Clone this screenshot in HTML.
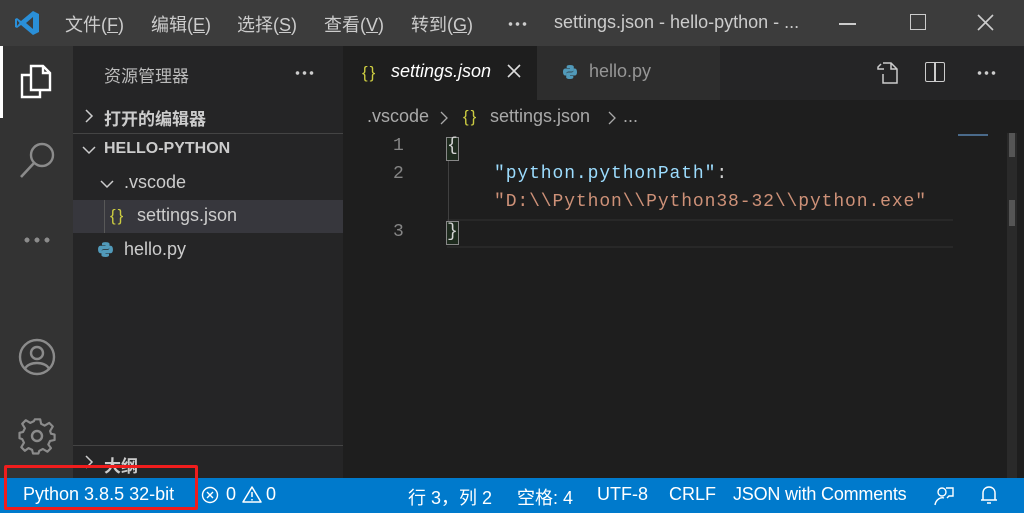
<!DOCTYPE html>
<html><head><meta charset="utf-8"><style>
*{margin:0;padding:0;box-sizing:border-box}
body{width:1024px;height:513px;overflow:hidden;background:#1e1e1e;font-family:"Liberation Sans","Noto Sans CJK SC",sans-serif;color:#ccc;position:relative}
.a{position:absolute;white-space:nowrap}
.mono{font-family:"Liberation Mono","DejaVu Sans Mono",monospace;font-size:18px;letter-spacing:0.9px}
.dots{position:absolute;width:20px;height:4px;background:radial-gradient(circle,#ccc 1.6px,transparent 2px) 0 0/7px 4px}
.br{position:absolute;font-size:17px;color:#cbcb41;letter-spacing:2px}
.st{position:absolute;top:484px;font-size:18px;color:#fff;white-space:nowrap}
</style></head><body>
<!-- title bar -->
<div class="a" style="left:0;top:0;width:1024px;height:46px;background:#3c3c3c"></div>
<svg class="a" style="left:14px;top:10px" width="26" height="26" viewBox="0 0 26 26"><path d="M19 1 L25 4 V22 L19 25 L7 15 L3 18 L1 17 V9 L3 8 L7 11 Z M19 7 L12 13 L19 19 Z M3 10 V16 L5.5 13 Z" fill="#2a8fd8"/></svg>
<div class="a" style="left:65px;top:11px;font-size:18px;color:#ccc">文件(<u>F</u>)</div>
<div class="a" style="left:151px;top:11px;font-size:18px;color:#ccc">编辑(<u>E</u>)</div>
<div class="a" style="left:237px;top:11px;font-size:18px;color:#ccc">选择(<u>S</u>)</div>
<div class="a" style="left:324px;top:11px;font-size:18px;color:#ccc">查看(<u>V</u>)</div>
<div class="a" style="left:411px;top:11px;font-size:18px;color:#ccc">转到(<u>G</u>)</div>
<div class="dots" style="left:507px;top:22px"></div>
<div class="a" style="left:554px;top:12px;font-size:18px;color:#ccc">settings.json - hello-python - ...</div>
<div class="a" style="left:839px;top:23px;width:17px;height:1.5px;background:#ccc"></div>
<div class="a" style="left:910px;top:14px;width:16px;height:16px;border:1.5px solid #ccc"></div>
<svg class="a" style="left:977px;top:14px" width="17" height="17"><path d="M1 1L16 16M16 1L1 16" stroke="#ccc" stroke-width="1.6"/></svg>
<!-- activity bar -->
<div class="a" style="left:0;top:46px;width:73px;height:432px;background:#333"></div>
<div class="a" style="left:0;top:46px;width:3px;height:72px;background:#fff"></div>
<svg class="a" style="left:18px;top:63px" width="36" height="38" viewBox="0 0 36 38"><path d="M13 3H25L32 10V27H13Z M25 3V10H32" fill="none" stroke="#fff" stroke-width="2.4"/><path d="M13 12H4V34H22V27" fill="none" stroke="#fff" stroke-width="2.4"/></svg>
<svg class="a" style="left:18px;top:140px" width="38" height="40"><circle cx="24" cy="15" r="11" fill="none" stroke="#8b8b8b" stroke-width="2.4"/><path d="M16 23L3 37" stroke="#8b8b8b" stroke-width="2.6"/></svg>
<div class="a" style="left:22px;top:237px;width:30px;height:6px;background:radial-gradient(circle,#8b8b8b 2.3px,transparent 2.6px) 0 0/10px 6px"></div>
<svg class="a" style="left:17px;top:337px" width="40" height="40"><circle cx="20" cy="20" r="17" fill="none" stroke="#8b8b8b" stroke-width="2.4"/><circle cx="20" cy="16" r="6" fill="none" stroke="#8b8b8b" stroke-width="2.4"/><path d="M8 32C11 24 29 24 32 32" fill="none" stroke="#8b8b8b" stroke-width="2.4"/></svg>
<svg class="a" style="left:17px;top:416px" width="40" height="40" viewBox="-20 -20 40 40"><path d="M-3 -18H3L4 -13L8 -11L13 -14L17 -10L14 -5L15 -2L19 -1V5L14 6L12 10L15 14L11 18L6 15L2 17L1 20H-5L-6 16L-10 14L-14 17L-18 13L-15 8L-17 4L-20 3V-3L-16 -4L-14 -8L-17 -13L-13 -17L-8 -14L-4 -16Z" transform="translate(0.5,-0.5) scale(0.9)" fill="none" stroke="#8b8b8b" stroke-width="2.4" stroke-linejoin="round"/><circle cx="0" cy="0" r="5" fill="none" stroke="#8b8b8b" stroke-width="2.4"/></svg>
<!-- sidebar -->
<div class="a" style="left:73px;top:46px;width:270px;height:432px;background:#252526"></div>
<div class="a" style="left:104px;top:62px;font-size:17px;color:#bbb">资源管理器</div>
<div class="dots" style="left:294px;top:71px"></div>
<svg class="a" style="left:85px;top:109px" width="9" height="14"><path d="M1 1L7 7L1 13" fill="none" stroke="#ccc" stroke-width="1.5"/></svg>
<div class="a" style="left:104px;top:105px;font-size:17px;font-weight:bold;color:#ccc">打开的编辑器</div>
<div class="a" style="left:73px;top:133px;width:270px;height:1px;background:#444"></div>
<svg class="a" style="left:82px;top:146px" width="14" height="10"><path d="M1 1L7 7L13 1" fill="none" stroke="#ccc" stroke-width="1.5"/></svg>
<div class="a" style="left:104px;top:140px;font-size:16px;font-weight:bold;color:#ccc">HELLO-PYTHON</div>
<svg class="a" style="left:100px;top:180px" width="14" height="10"><path d="M1 1L7 7L13 1" fill="none" stroke="#ccc" stroke-width="1.5"/></svg>
<div class="a" style="left:124px;top:172px;font-size:18px;color:#ccc">.vscode</div>
<div class="a" style="left:73px;top:200px;width:270px;height:33px;background:#37373d"></div>
<div class="a" style="left:104px;top:200px;width:1px;height:33px;background:#585858"></div>
<div class="br" style="left:110px;top:206px">{}</div>
<div class="a" style="left:137px;top:205px;font-size:18px;color:#ccc">settings.json</div>
<svg class="a" style="left:97px;top:241px" width="17" height="17" viewBox="0 0 16 16"><path d="M7.9 1C4.5 1 4.7 2.5 4.7 2.5V4H8V4.5H3.4S1 4.2 1 7.9s2.1 3.6 2.1 3.6H4.4V9.7S4.3 7.6 6.5 7.6h3.3s2 0 2-2V2.8S12.1 1 7.9 1z" fill="#519aba"/><path d="M8.1 15c3.4 0 3.2-1.5 3.2-1.5V12H8v-.5h4.6S15 11.8 15 8.1s-2.1-3.6-2.1-3.6h-1.3v1.8s.1 2.1-2.1 2.1H6.2s-2 0-2 2v2.8S3.9 15 8.1 15z" fill="#519aba"/></svg>
<div class="a" style="left:124px;top:239px;font-size:18px;color:#ccc">hello.py</div>
<div class="a" style="left:73px;top:445px;width:270px;height:1px;background:#444"></div>
<svg class="a" style="left:85px;top:455px" width="9" height="14"><path d="M1 1L7 7L1 13" fill="none" stroke="#ccc" stroke-width="1.5"/></svg>
<div class="a" style="left:104px;top:452px;font-size:17px;font-weight:bold;color:#ccc">大纲</div>
<!-- tabs -->
<div class="a" style="left:343px;top:46px;width:681px;height:54px;background:#252526"></div>
<div class="a" style="left:343px;top:46px;width:194px;height:54px;background:#1e1e1e"></div>
<div class="a" style="left:537px;top:46px;width:183px;height:54px;background:#2d2d2d"></div>
<div class="br" style="left:362px;top:63px">{}</div>
<div class="a" style="left:391px;top:61px;font-size:18px;color:#fff;font-style:italic">settings.json</div>
<svg class="a" style="left:507px;top:64px" width="14" height="14"><path d="M1 1L13 13M13 1L1 13" stroke="#ddd" stroke-width="1.6"/></svg>
<svg class="a" style="left:562px;top:64px" width="16" height="16" viewBox="0 0 16 16"><path d="M7.9 1C4.5 1 4.7 2.5 4.7 2.5V4H8V4.5H3.4S1 4.2 1 7.9s2.1 3.6 2.1 3.6H4.4V9.7S4.3 7.6 6.5 7.6h3.3s2 0 2-2V2.8S12.1 1 7.9 1z" fill="#519aba"/><path d="M8.1 15c3.4 0 3.2-1.5 3.2-1.5V12H8v-.5h4.6S15 11.8 15 8.1s-2.1-3.6-2.1-3.6h-1.3v1.8s.1 2.1-2.1 2.1H6.2s-2 0-2 2v2.8S3.9 15 8.1 15z" fill="#519aba"/></svg>
<div class="a" style="left:589px;top:61px;font-size:18px;color:#969696">hello.py</div>
<svg class="a" style="left:874px;top:60px" width="26" height="26"><path d="M9 3H17L23 9V23H9V14 M17 3V9H23" fill="none" stroke="#ccc" stroke-width="1.5"/><path d="M10 9H4V7L7 4" fill="none" stroke="#ccc" stroke-width="1.5"/></svg>
<div class="a" style="left:925px;top:62px;width:20px;height:20px;border:1.6px solid #ccc;border-radius:2px"></div>
<div class="a" style="left:934px;top:62px;width:1.6px;height:20px;background:#ccc"></div>
<div class="dots" style="left:976px;top:71px"></div>
<!-- breadcrumb -->
<div class="a" style="left:367px;top:106px;font-size:18px;color:#a9a9a9">.vscode</div>
<svg class="a" style="left:440px;top:111px" width="9" height="14"><path d="M1 1L7 7L1 13" fill="none" stroke="#a9a9a9" stroke-width="1.3"/></svg>
<div class="br" style="left:463px;top:107px">{}</div>
<div class="a" style="left:490px;top:106px;font-size:18px;color:#a9a9a9">settings.json</div>
<svg class="a" style="left:608px;top:111px" width="9" height="14"><path d="M1 1L7 7L1 13" fill="none" stroke="#a9a9a9" stroke-width="1.3"/></svg>
<div class="a" style="left:623px;top:106px;font-size:18px;color:#a9a9a9">...</div>
<!-- code -->
<div class="a" style="left:447px;top:219px;width:506px;height:29px;border-top:2px solid #282828;border-bottom:2px solid #282828"></div>
<div class="a" style="left:448px;top:148px;width:1px;height:90px;background:#404040"></div>
<div class="a mono" style="left:393px;top:136px;color:#858585">1</div>
<div class="a mono" style="left:393px;top:164px;color:#858585">2</div>
<div class="a mono" style="left:393px;top:222px;color:#858585">3</div>
<div class="a" style="left:446px;top:137px;width:13px;height:24px;border:1px solid #888;background:#1e2b1e"></div>
<div class="a" style="left:446px;top:221px;width:13px;height:24px;border:1px solid #888;background:#1e2b1e"></div>
<div class="a mono" style="left:447px;top:136px;color:#d4d4d4">{</div>
<div class="a mono" style="left:494px;top:164px;color:#9cdcfe">"python.pythonPath"<span style="color:#d4d4d4">:</span></div>
<div class="a mono" style="left:494px;top:192px;color:#ce9178">"D:\\Python\\Python38-32\\python.exe"</div>
<div class="a mono" style="left:447px;top:222px;color:#d4d4d4">}</div>
<!-- minimap / scrollbar -->
<div class="a" style="left:958px;top:134px;width:30px;height:2px;background:#4a6a8a"></div>
<div class="a" style="left:1007px;top:133px;width:10px;height:345px;background:#2a2a2a"></div>
<div class="a" style="left:1009px;top:133px;width:6px;height:24px;background:#555"></div>
<div class="a" style="left:1009px;top:200px;width:6px;height:26px;background:#555"></div>
<!-- status bar -->
<div class="a" style="left:0;top:478px;width:1024px;height:35px;background:#007acc"></div>
<div class="st" style="left:23px">Python 3.8.5 32-bit</div>
<svg class="a" style="left:201px;top:486px" width="18" height="18"><circle cx="9" cy="9" r="7.5" fill="none" stroke="#fff" stroke-width="1.4"/><path d="M6 6L12 12M12 6L6 12" stroke="#fff" stroke-width="1.4"/></svg>
<div class="st" style="left:226px">0</div>
<svg class="a" style="left:242px;top:485px" width="20" height="19"><path d="M10 2L19 17H1Z" fill="none" stroke="#fff" stroke-width="1.5" stroke-linejoin="round"/><path d="M10 7V12M10 14V15.5" stroke="#fff" stroke-width="1.5"/></svg>
<div class="st" style="left:266px">0</div>
<div class="st" style="left:408px">行 3，列 2</div>
<div class="st" style="left:517px">空格: 4</div>
<div class="st" style="left:597px">UTF-8</div>
<div class="st" style="left:669px">CRLF</div>
<div class="st" style="left:733px;letter-spacing:-0.2px">JSON with Comments</div>
<svg class="a" style="left:933px;top:485px" width="22" height="22"><circle cx="9" cy="7" r="4" fill="none" stroke="#fff" stroke-width="1.4"/><path d="M2 20C3 14 8 12 11 13M13 3H20V11H16L14 13" fill="none" stroke="#fff" stroke-width="1.4"/></svg>
<svg class="a" style="left:979px;top:484px" width="20" height="22"><path d="M4 16V9C4 5 7 3 10 3S16 5 16 9V16H4ZM2 16H18M8 19H12" fill="none" stroke="#fff" stroke-width="1.5"/></svg>
<!-- red box -->
<div class="a" style="left:4px;top:465px;width:194px;height:45px;border:3px solid #f01d1d;border-radius:2px"></div>
</body></html>
